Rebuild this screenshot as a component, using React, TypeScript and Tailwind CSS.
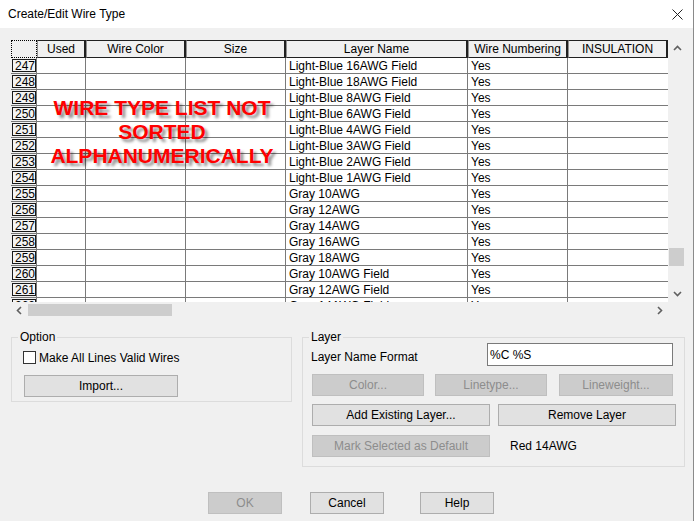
import React from "react";

const rows: [number, string][] = [
  [247, "Light-Blue 16AWG Field"],
  [248, "Light-Blue 18AWG Field"],
  [249, "Light-Blue 8AWG Field"],
  [250, "Light-Blue 6AWG Field"],
  [251, "Light-Blue 4AWG Field"],
  [252, "Light-Blue 3AWG Field"],
  [253, "Light-Blue 2AWG Field"],
  [254, "Light-Blue 1AWG Field"],
  [255, "Gray 10AWG"],
  [256, "Gray 12AWG"],
  [257, "Gray 14AWG"],
  [258, "Gray 16AWG"],
  [259, "Gray 18AWG"],
  [260, "Gray 10AWG Field"],
  [261, "Gray 12AWG Field"],
  [262, "Gray 14AWG Field"],
];

const headers = ["Used", "Wire Color", "Size", "Layer Name", "Wire Numbering", "INSULATION"];

function Chevron({ dir }: { dir: "up" | "down" | "left" | "right" }) {
  const d = {
    up: "M1 6 L4.5 2.5 L8 6",
    down: "M1 3 L4.5 6.5 L8 3",
    left: "M6 1 L2.5 4.5 L6 8",
    right: "M3 1 L6.5 4.5 L3 8",
  }[dir];
  return (
    <svg width="9" height="9" viewBox="0 0 9 9">
      <path d={d} fill="none" stroke="#606060" strokeWidth="1.6" />
    </svg>
  );
}

function Btn({
  children,
  w,
  disabled,
  className = "",
}: {
  children: React.ReactNode;
  w: string;
  disabled?: boolean;
  className?: string;
}) {
  return (
    <div
      className={
        "h-[22px] flex items-center justify-center border text-[12px] " +
        w +
        " " +
        (disabled
          ? "bg-[#cccccc] border-[#bfbfbf] text-[#8d8d8d]"
          : "bg-[#e1e1e1] border-[#adadad] text-black") +
        " " +
        className
      }
    >
      {children}
    </div>
  );
}

export default function App() {
  return (
    <div className="w-[696px] h-[521px] overflow-hidden bg-white font-['Liberation_Sans',Arial,sans-serif] text-[12px] text-black">
      <div className="w-[694px] h-full border-r border-[#8a8a8a] bg-[#f0f0f0] flex flex-col">
        {/* Title bar */}
        <div className="h-[28px] bg-white flex items-center justify-between pl-[8px] pr-[10px] shrink-0">
          <span className="text-[12px]">Create/Edit Wire Type</span>
          <svg width="11" height="11" viewBox="0 0 11 11">
            <path d="M0.5 0.5 L10.5 10.5 M10.5 0.5 L0.5 10.5" stroke="#222" strokeWidth="1" />
          </svg>
        </div>

        <div className="pl-[11px] pt-[12px]">
          {/* Grid + scrollbars */}
          <div className="flex">
            <div className="w-[657px]">
              <div className="relative h-[262px] overflow-hidden bg-white">
                <div className="grid grid-cols-[26px_49px_100px_100px_182px_100px_100px]">
                  <div className="h-[18px] bg-[#f0f0f0] border border-dotted border-black" />
                  {headers.map((h) => (
                    <div
                      key={h}
                      className="h-[18px] bg-[#f0f0f0] border-t border-b border-r-2 border-[#202020] border-l border-l-[#909090] flex items-center justify-center leading-none"
                    >
                      {h}
                    </div>
                  ))}
                  {rows.map(([n, layer]) => (
                    <React.Fragment key={n}>
                      <div className="h-[16px] bg-[#f0f0f0] border-r border-b border-[#7a7a7a] p-[1px] pr-0">
                        <div className="h-full border border-[#1a1a1a] bg-[#f4f4f4] pl-[2px] flex items-center leading-none">
                          {n}
                        </div>
                      </div>
                      <div className="h-[16px] border-r border-b border-[#7a7a7a]" />
                      <div className="h-[16px] border-r border-b border-[#7a7a7a]" />
                      <div className="h-[16px] border-r border-b border-[#7a7a7a]" />
                      <div className="h-[16px] border-r border-b border-[#7a7a7a] pl-[3px] flex items-center leading-none whitespace-nowrap">
                        {layer}
                      </div>
                      <div className="h-[16px] border-r border-b border-[#7a7a7a] pl-[3px] flex items-center leading-none">
                        Yes
                      </div>
                      <div className="h-[16px] border-b border-[#7a7a7a]" />
                    </React.Fragment>
                  ))}
                </div>

                {/* Annotation overlay */}
                <div className="absolute left-[31px] top-[56px] w-[240px] flex flex-col items-center text-[21px] leading-[24px] font-bold text-[#ff0000] [text-shadow:3px_3px_3px_rgba(0,0,0,0.45)] font-['Liberation_Sans',Arial,sans-serif]">
                  <span>WIRE TYPE LIST NOT</span>
                  <span>SORTED</span>
                  <span>ALPHANUMERICALLY</span>
                </div>
              </div>
              {/* Horizontal scrollbar */}
              <div className="h-[16px] flex items-center">
                <div className="w-[17px] flex justify-center">
                  <Chevron dir="left" />
                </div>
                <div className="flex-1 h-full py-[2px]">
                  <div className="w-[144px] h-full bg-[#cdcdcd]" />
                </div>
                <div className="w-[17px] flex justify-center">
                  <Chevron dir="right" />
                </div>
              </div>
            </div>
            {/* Vertical scrollbar */}
            <div className="w-[18px] flex flex-col">
              <div className="h-[262px] flex flex-col items-center">
                <div className="h-[17px] flex items-center">
                  <Chevron dir="up" />
                </div>
                <div className="flex-1 w-full pl-[1px] pr-[2px] pt-[191px]">
                  <div className="h-[18px] bg-[#cdcdcd]" />
                </div>
                <div className="h-[17px] flex items-center">
                  <Chevron dir="down" />
                </div>
              </div>
            </div>
          </div>

          {/* Option / Layer groups */}
          <div className="flex items-start gap-[10px] mt-[12px]">
            <fieldset className="w-[281px] border border-[#dcdcdc] pl-[12px] pr-[8px] pb-[4px] m-0">
              <legend className="-ml-[6px] px-[2px] leading-[14px]">Option</legend>
              <div className="flex items-center mt-[7px] h-[13px] -ml-[1px]">
                <div className="w-[13px] h-[13px] border border-[#333] bg-white" />
                <span className="ml-[3px]">Make All Lines Valid Wires</span>
              </div>
              <Btn w="w-[154px]" className="mt-[11px]">
                Import...
              </Btn>
            </fieldset>

            <fieldset className="w-[383px] border border-[#dcdcdc] pl-[9px] pb-[9px] m-0">
              <legend className="-ml-[3px] px-[2px] leading-[14px]">Layer</legend>
              <div className="flex items-center -mt-[1px]">
                <span className="w-[175px] pt-[4px] -ml-[1px] mr-[1px]">Layer Name Format</span>
                <div className="w-[186px] h-[23px] bg-white border border-[#7a7a7a] pl-[2px] flex items-center">
                  %C %S
                </div>
              </div>
              <div className="flex mt-[8px]">
                <Btn w="w-[112px]" disabled>
                  Color...
                </Btn>
                <Btn w="w-[112px]" disabled className="ml-[11px]">
                  Linetype...
                </Btn>
                <Btn w="w-[114px]" disabled className="ml-[12px]">
                  Lineweight...
                </Btn>
              </div>
              <div className="flex mt-[8px]">
                <Btn w="w-[178px]">Add Existing Layer...</Btn>
                <Btn w="w-[178px]" className="ml-[8px]">
                  Remove Layer
                </Btn>
              </div>
              <div className="flex items-center mt-[9px]">
                <Btn w="w-[178px]" disabled>
                  Mark Selected as Default
                </Btn>
                <span className="ml-[20px]">Red 14AWG</span>
              </div>
            </fieldset>
          </div>

          {/* Dialog buttons */}
          <div className="flex mt-[25px] ml-[197px]">
            <Btn w="w-[74px]" disabled>
              OK
            </Btn>
            <Btn w="w-[74px]" className="ml-[28px]">
              Cancel
            </Btn>
            <Btn w="w-[74px]" className="ml-[36px]">
              Help
            </Btn>
          </div>
        </div>
      </div>
    </div>
  );
}
